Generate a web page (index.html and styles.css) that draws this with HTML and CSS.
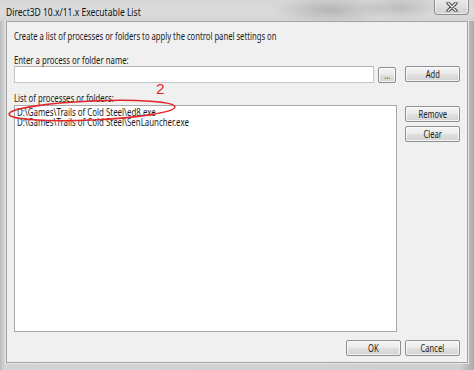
FILE: index.html
```html
<!DOCTYPE html>
<html>
<head>
<meta charset="utf-8">
<link rel="stylesheet" href="styles.css">
</head>
<body>
<div class="window">
  <div class="titlebar">
    <span class="t title">Direct3D 10.x/11.x Executable List</span>
    <div class="close">
      <svg width="14" height="10" viewBox="0 0 14 10">
        <path d="M3 1 L11 9 M11 1 L3 9" stroke="#3c3c3c" stroke-width="3.2" stroke-linecap="round"/>
        <path d="M3 1 L11 9 M11 1 L3 9" stroke="#f4f4f4" stroke-width="1.4" stroke-linecap="round"/>
      </svg>
    </div>
  </div>
  <div class="client">
    <div class="desc"><span class="t">Create a list of processes or folders to apply the control panel settings on</span></div>
    <div class="lbl lbl1"><span class="t">Enter a process or folder name:</span></div>
    <div class="row-input">
      <div class="input"></div>
      <button class="btn dots"><span class="t">...</span></button>
      <button class="btn wide"><span class="t">Add</span></button>
    </div>
    <div class="lbl lbl2"><span class="t">List of processes or folders:</span></div>
    <div class="row-list">
      <div class="listbox">
        <div class="item"><span class="t">D:\Games\Trails of Cold Steel\ed8.exe</span></div>
        <div class="item"><span class="t">D:\Games\Trails of Cold Steel\SenLauncher.exe</span></div>
      </div>
      <div class="side">
        <button class="btn wide"><span class="t">Remove</span></button>
        <button class="btn wide"><span class="t">Clear</span></button>
      </div>
    </div>
    <div class="footer">
      <button class="btn wide"><span class="t">OK</span></button>
      <button class="btn wide"><span class="t">Cancel</span></button>
    </div>
  </div>
  <svg class="annot-ring" width="180" height="30" viewBox="0 0 180 30">
    <ellipse cx="89" cy="13.5" rx="83" ry="9.5" fill="none" stroke="#e3262b" stroke-width="1.6" transform="rotate(-2.5 89 13.5)"/>
  </svg>
  <span class="annot-num">2</span>
</div>
</body>
</html>
```

FILE: styles.css
```css
* { box-sizing: border-box; }
html, body { margin: 0; padding: 0; }
body {
  width: 474px;
  height: 370px;
  overflow: hidden;
  font-family: "Noto Sans", "DejaVu Sans", sans-serif;
  font-size: 10.5px;
  color: #1a1a1a;
  background: #c4c6c8;
}
.window {
  position: relative;
  width: 474px;
  height: 370px;
  display: flex;
  flex-direction: column;
  background: linear-gradient(90deg, #b9bbbd 0px, #d2d3d4 4px, #cfd0d1 460px, #a9abad 474px);
}
.titlebar {
  position: relative;
  height: 21px;
  display: flex;
  align-items: center;
  padding-left: 6px;
  background:
    radial-gradient(ellipse 60px 14px at 330px 10px, rgba(150,150,150,0.55), rgba(150,150,150,0)),
    radial-gradient(ellipse 40px 12px at 400px 8px, rgba(160,160,160,0.5), rgba(160,160,160,0)),
    linear-gradient(180deg, #d6d6d6 0%, #dcdcdc 60%, #d4d4d4 100%);
}
.t {
  display: inline-block;
  white-space: nowrap;
  transform: scaleX(0.74);
  transform-origin: left center;
}
.title {
  font-size: 11.5px;
  color: #111;
  transform: scaleX(0.74);
  margin-top: 1px;
}
.desc .t { transform: scaleX(0.73); }
.close {
  position: absolute;
  left: 434px;
  top: -1px;
  width: 35px;
  height: 16px;
  border: 1px solid #8c8c8c;
  border-top: none;
  border-radius: 0 0 4px 4px;
  background: linear-gradient(180deg, #eaeaea 0%, #dedede 50%, #cfcfcf 100%);
  box-shadow: inset 0 0 0 1px rgba(255,255,255,0.6);
  display: flex;
  align-items: center;
  justify-content: center;
}
.client {
  margin: 0 6px;
  height: 342px;
  border: 1px solid #a3a3a3;
  box-shadow: 0 0 0 1px #e4e4e4;
  background: #f0f0f0;
  padding: 0 7px 6px 7px;
  display: flex;
  flex-direction: column;
}
.desc {
  margin-top: 8px;
  height: 12px;
  line-height: 12px;
}
.lbl { height: 12px; line-height: 12px; }
.lbl1 { margin-top: 12px; }
.lbl2 { margin-top: 9px; }
.row-input {
  margin-top: 0px;
  display: flex;
  height: 17px;
}
.input {
  width: 360px;
  height: 17px;
  background: #fff;
  border: 1px solid #c4c6c8;
  border-top-color: #b0b2b4;
}
.btn {
  font: inherit;
  color: #1a1a1a;
  height: 16px;
  padding: 0;
  border: 1px solid #8e8f90;
  border-radius: 2px;
  background: linear-gradient(180deg, #f4f4f4 0%, #ececec 45%, #dedede 55%, #d4d4d4 100%);
  box-shadow: inset 0 0 0 1px rgba(255,255,255,0.7);
  display: flex;
  align-items: center;
  justify-content: center;
  line-height: 12px;
}
.btn .t { transform-origin: center center; transform: scaleX(0.72); }
.dots { width: 18px; margin-left: 4px; margin-top: 1px; }
.dots .t { color: #555; }
.row-input .wide { margin-left: 9px; }
.wide { width: 55px; }
.row-list {
  margin-top: 1px;
  flex: 1;
  display: flex;
  gap: 8px;
}
.listbox {
  width: 383px;
  background: #fff;
  border: 1px solid #a7a8a9;
  padding: 1px 2px;
}
.item {
  height: 10px;
  line-height: 10px;
  font-size: 10.5px;
}
.item .t { transform: scaleX(0.75); }
.side {
  margin-top: 1px;
  display: flex;
  flex-direction: column;
  gap: 4px;
}
.footer {
  margin-top: 8px;
  display: flex;
  justify-content: flex-end;
  gap: 4px;
  height: 16px;
}
.annot-ring {
  position: absolute;
  left: 3px;
  top: 97px;
}
.annot-num {
  position: absolute;
  left: 156px;
  top: 80px;
  font-family: "Liberation Sans", sans-serif;
  font-size: 15.5px;
  line-height: 18px;
  color: #e3262b;
}
```
